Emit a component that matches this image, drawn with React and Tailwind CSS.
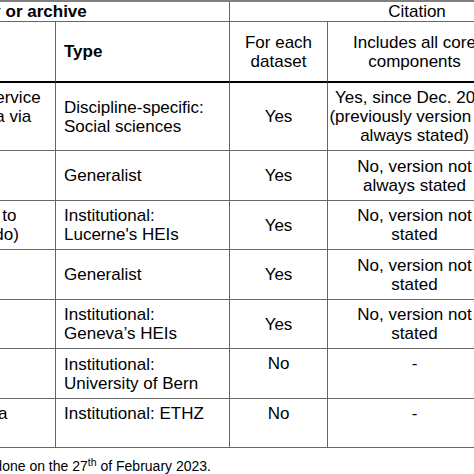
import React from 'react'

const rows = [
  {
    name: ['FORS data service', '(archived data via', 'FORSbase)'],
    type: ['Discipline-specific:', 'Social sciences'],
    each: 'Yes',
    core: ['Yes, since Dec. 2019', '(previously version not', 'always stated)'],
    pid: ['DOI'],
  },
  {
    name: ['Zenodo'],
    type: ['Generalist'],
    each: 'Yes',
    core: ['No, version not', 'always stated'],
    pid: ['DOI'],
  },
  {
    name: ['LORY (linked to', 'files on Zenodo)'],
    type: ['Institutional:', "Lucerne's HEIs"],
    each: 'Yes',
    core: ['No, version not', 'stated'],
    pid: ['DOI'],
  },
  {
    name: ['Figshare'],
    type: ['Generalist'],
    each: 'Yes',
    core: ['No, version not', 'stated'],
    pid: ['DOI'],
  },
  {
    name: ['Yareta'],
    type: ['Institutional:', 'Geneva’s HEIs'],
    each: 'Yes',
    core: ['No, version not', 'stated'],
    pid: ['DOI'],
  },
  {
    name: ['BORIS'],
    type: ['Institutional:', 'University of Bern'],
    each: 'No',
    core: ['-'],
    pid: ['DOI'],
    topRight: true,
  },
  {
    name: ['Research data', 'Collection'],
    type: ['Institutional: ETHZ'],
    each: 'No',
    core: ['-'],
    pid: ['DOI'],
    topAll: true,
  },
]

function Lines({ items }) {
  return items.map((t, i) => (
    <span key={i} className="block whitespace-nowrap">
      {t}
    </span>
  ))
}

export default function App() {
  const cell = 'flex flex-col border-b border-[#666]'
  const mid = 'justify-center'
  const top = 'justify-start pt-[5px]'

  return (
    <div className="w-[474px] h-[474px] overflow-hidden bg-white text-black font-['Liberation_Sans',Arial,sans-serif] text-[17px] leading-[19px]">
      <div className="-ml-[112px] w-[717px] grid grid-cols-[168px_174px_98px_174px_103px] grid-rows-[20px_61px_68px_50px_49px_50px_49px_50px_49px] border-t-2 border-[#7f7f7f]">
        {/* header row 1 */}
        <div className={`col-span-2 ${cell} ${mid} border-r pl-[24px] font-bold`}>
          <span className="whitespace-nowrap">Repository or archive</span>
        </div>
        <div className={`col-span-3 ${cell} ${mid} items-center`}>
          <span className="-ml-[1px]">Citation</span>
        </div>

        {/* header row 2 */}
        <div className={`flex flex-col ${mid} border-b-2 border-black border-r-[#666] border-r pl-[9px] font-bold`}>
          Name
        </div>
        <div className={`flex flex-col ${mid} border-b-2 border-black border-r-[#666] border-r pl-[8px] font-bold`}>
          Type
        </div>
        <div className={`flex flex-col ${mid} border-b-2 border-black border-r-[#666] border-r items-center text-center`}>
          <Lines items={['For each', 'dataset']} />
        </div>
        <div className={`flex flex-col ${mid} border-b-2 border-black border-r-[#666] border-r items-center text-center`}>
          <Lines items={['Includes all core', 'components']} />
        </div>
        <div className={`flex flex-col ${mid} border-b-2 border-black items-center text-center`}>
          <Lines items={['Persistent', 'identifier']} />
        </div>

        {/* body */}
        {rows.map((r, i) => (
          <React.Fragment key={i}>
            <div className={`${cell} ${r.topAll ? top : mid} border-r pl-[9px]`}>
              <Lines items={r.name} />
            </div>
            <div className={`${cell} ${r.topAll ? top : mid} border-r pl-[8px]`}>
              <Lines items={r.type} />
            </div>
            <div className={`${cell} ${r.topAll || r.topRight ? top : mid} border-r items-center`}>
              {r.each}
            </div>
            <div className={`${cell} ${r.topAll || r.topRight ? top : mid} border-r items-center text-center`}>
              <Lines items={r.core} />
            </div>
            <div className={`${cell} ${r.topAll || r.topRight ? top : mid} items-center`}>
              <Lines items={r.pid} />
            </div>
          </React.Fragment>
        ))}
      </div>

      <p className="-ml-[154px] pt-[10px] text-[14px] leading-[17px] whitespace-nowrap">
        Note: The analysis was done on the 27<sup>th</sup> of February 2023.
      </p>
    </div>
  )
}
